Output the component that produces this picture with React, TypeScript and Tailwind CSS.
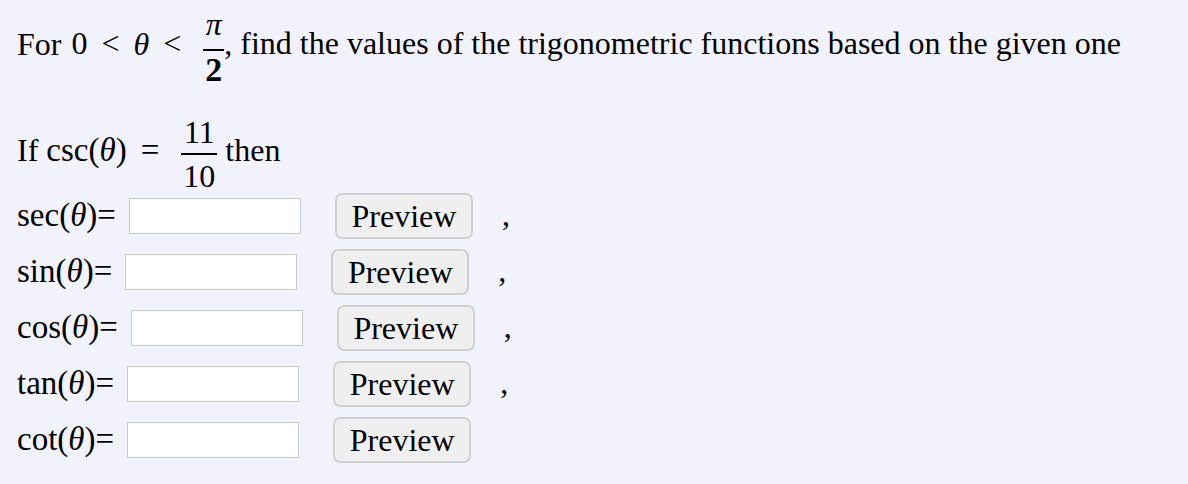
import React from "react";

const serif = { fontFamily: '"Liberation Serif", "Times New Roman", serif' };

function Frac({ num, den, numClass = "", denClass = "" }: { num: string; den: string; numClass?: string; denClass?: string }) {
  return (
    <span className="mx-[8px] inline-flex flex-col items-center align-middle leading-none">
      <span className={`px-[2px] ${numClass}`}>{num}</span>
      <span className="h-[2px] w-full bg-black" />
      <span className={`px-[2px] ${denClass}`}>{den}</span>
    </span>
  );
}

const rows = [
  { fn: "sec", comma: true },
  { fn: "sin", comma: true },
  { fn: "cos", comma: true },
  { fn: "tan", comma: true },
  { fn: "cot", comma: false },
];

function Row({ fn, comma }: { fn: string; comma: boolean }) {
  return (
    <div className="flex h-[46px] items-center">
      <span className="whitespace-nowrap text-[33px]">
        {fn}(<i>θ</i>)=
      </span>
      <input
        type="text"
        className="ml-[13px] h-[36px] w-[172px] border border-[#c8c8c8] bg-white px-2 outline-none"
      />
      <button className="ml-[34px] h-[46px] w-[138px] rounded-[7px] border-2 border-[#cfcfcf] bg-[#efefef] text-[32px] leading-none text-black">
        Preview
      </button>
      {comma ? <span className="ml-[29px] self-end pb-[1px]">,</span> : null}
    </div>
  );
}

export default function App() {
  return (
    <div className="min-h-[484px] w-[1188px] bg-[#f2f2fc] pl-[17px] pt-[15px] text-[32px] text-black" style={serif}>
      <div className="flex h-[64px] items-center whitespace-nowrap">
        <span>
          For <span className="ml-[2px]">0</span>
          <span className="mx-[14px]">&lt;</span>
          <i>θ</i>
          <span className="mx-[14px]">&lt;</span>
          <Frac num="π" den="2" numClass="pb-[9px] italic" denClass="pt-[2px] text-[34px] font-bold" />
          <span className="-ml-[8px]">, find the values of the trigonometric functions based on the given one</span>
        </span>
      </div>
      <div className="mt-[39px] flex h-[72px] items-center whitespace-nowrap">
        <span>
          If <span className="text-[33px]">csc(<i>θ</i>)</span>
          <span className="mx-[14px] text-[33px]">=</span>
          <Frac num="11" den="10" numClass="pb-[5px]" denClass="pt-[5px]" />
          then
        </span>
      </div>
      <div className="mt-[3px] flex flex-col gap-[10px]">
        {rows.map((r) => (
          <Row key={r.fn} fn={r.fn} comma={r.comma} />
        ))}
      </div>
    </div>
  );
}
